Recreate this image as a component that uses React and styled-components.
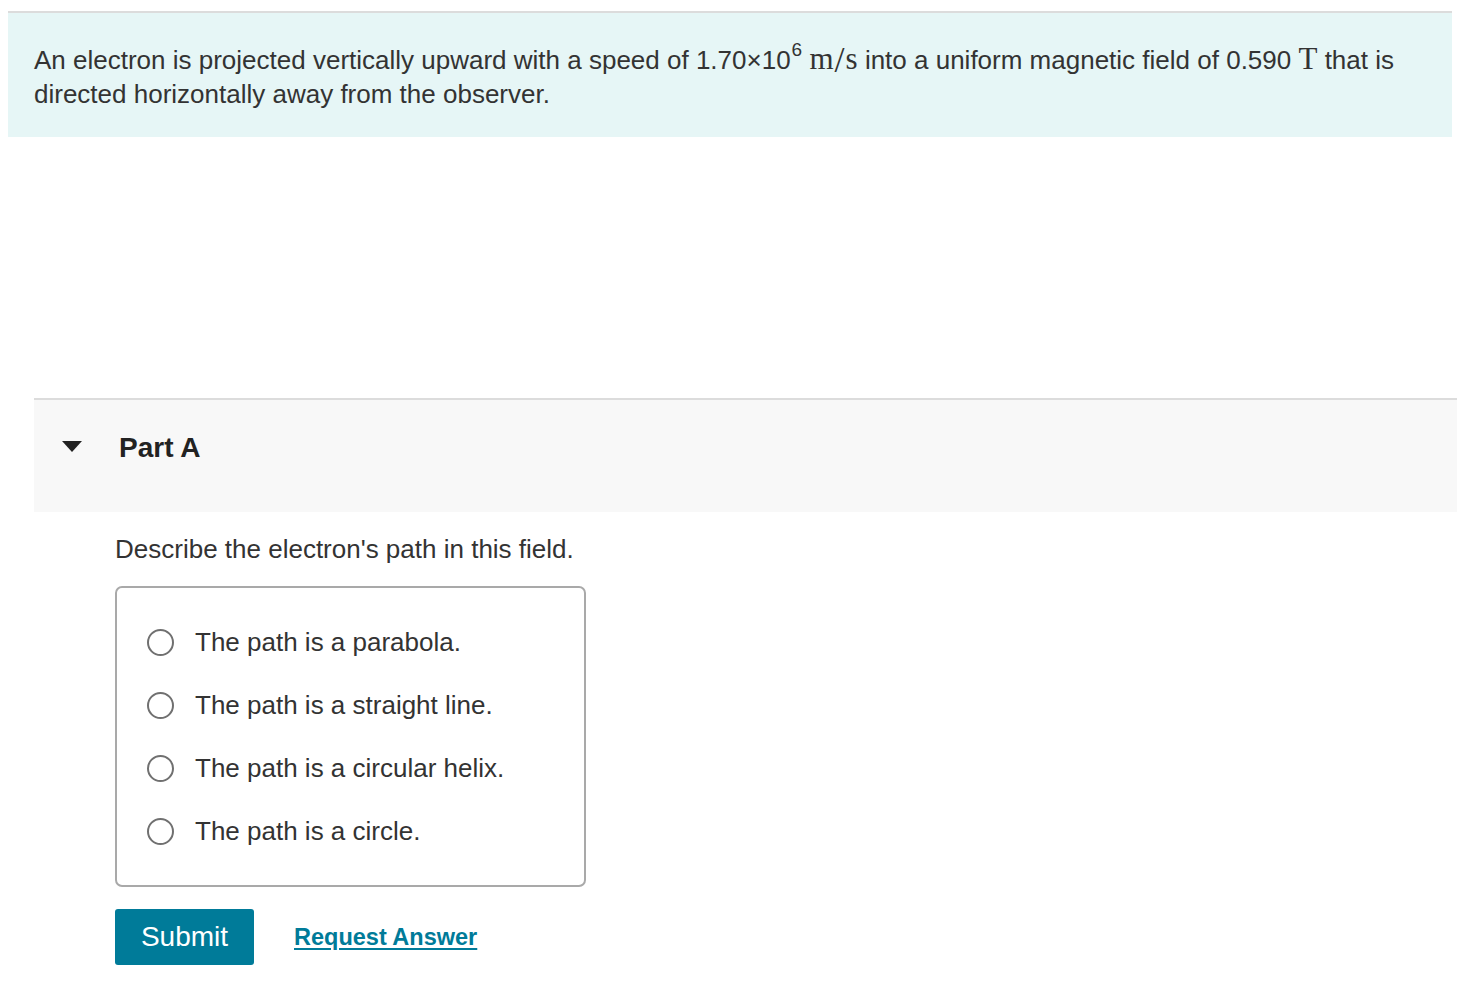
import React from 'react'
import styled, { createGlobalStyle } from 'styled-components'

const GlobalStyle = createGlobalStyle`
  html, body {
    margin: 0;
    padding: 0;
    background: #fff;
  }
  body {
    font-family: "Liberation Sans", Arial, Helvetica, sans-serif;
    color: #333;
  }
`

const Page = styled.div`
  width: 1466px;
  padding-top: 11px;
`

const Intro = styled.div`
  margin: 0 14px 0 8px;
  border-top: 2px solid #dcdcdc;
  background: #e6f6f6;
  padding: 30px 26px 26px;
  font-size: 26px;
  line-height: 34px;
  color: #333;
`

const Math = styled.span`
  font-family: "Liberation Serif", "DejaVu Serif", serif;
  font-size: 31px;
  line-height: 0;
`

const Slash = styled.span`
  display: inline-block;
  font-size: 36px;
  line-height: 0;
  transform: translateY(3px);
  margin: 0 1px;
`

const Sup = styled.sup`
  font-size: 19px;
  line-height: 0;
  position: relative;
  top: -3px;
  margin-left: 1px;
`

const Spacer = styled.div`
  height: 261px;
`

const Part = styled.section`
  margin: 0 9px 0 34px;
`

const PartHeader = styled.div`
  display: flex;
  align-items: center;
  height: 114px;
  border-top: 2px solid #dcdcdc;
  background: #f8f8f8;
  padding-left: 28px;
  padding-bottom: 17px;
  box-sizing: border-box;
  gap: 37px;
`

const Caret = styled.span`
  width: 0;
  height: 0;
  border-left: 10px solid transparent;
  border-right: 10px solid transparent;
  border-top: 11px solid #222;
  margin-top: -3px;
`

const PartTitle = styled.h2`
  margin: 0;
  font-size: 28px;
  font-weight: 700;
  color: #222;
`

const PartBody = styled.div`
  padding: 21px 0 0 81px;
`

const Prompt = styled.p`
  margin: 0 0 21px;
  font-size: 26px;
  line-height: 32px;
  color: #333;
`

const Choices = styled.div`
  box-sizing: border-box;
  width: 471px;
  height: 301px;
  border: 2px solid #a9a9a9;
  border-radius: 7px;
  padding: 38px 0 0 30px;
  display: flex;
  flex-direction: column;
  gap: 31px;
`

const Choice = styled.label`
  display: flex;
  align-items: center;
  gap: 21px;
  height: 32px;
  font-size: 26px;
  color: #333;
`

const Radio = styled.span`
  box-sizing: border-box;
  width: 27px;
  height: 27px;
  border-radius: 50%;
  border: 2px solid #707070;
  background: #fff;
  flex: none;
`

const Actions = styled.div`
  display: flex;
  align-items: center;
  gap: 40px;
  margin-top: 22px;
`

const SubmitButton = styled.button`
  width: 139px;
  height: 56px;
  border: none;
  border-radius: 3px;
  background: #007b99;
  color: #fff;
  font-family: "Liberation Sans", Arial, sans-serif;
  font-size: 28px;
  padding: 0;
`

const AnswerLink = styled.a`
  color: #007b99;
  font-size: 23.5px;
  font-weight: 700;
  text-decoration: underline;
  text-underline-offset: 3px;
`

const choices = [
  'The path is a parabola.',
  'The path is a straight line.',
  'The path is a circular helix.',
  'The path is a circle.',
]

export default function App() {
  return (
    <Page>
      <GlobalStyle />
      <Intro>
        An electron is projected vertically upward with a speed of 1.70×10<Sup>6</Sup>{' '}
        <Math>
          m<Slash>/</Slash>s
        </Math>{' '}
        into a uniform magnetic field of 0.590 <Math>T</Math> that is directed horizontally away from
        the observer.
      </Intro>
      <Spacer />
      <Part>
        <PartHeader>
          <Caret />
          <PartTitle>Part A</PartTitle>
        </PartHeader>
        <PartBody>
          <Prompt>Describe the electron's path in this field.</Prompt>
          <Choices>
            {choices.map((c) => (
              <Choice key={c}>
                <Radio />
                {c}
              </Choice>
            ))}
          </Choices>
          <Actions>
            <SubmitButton>Submit</SubmitButton>
            <AnswerLink href="#">Request Answer</AnswerLink>
          </Actions>
        </PartBody>
      </Part>
    </Page>
  )
}
